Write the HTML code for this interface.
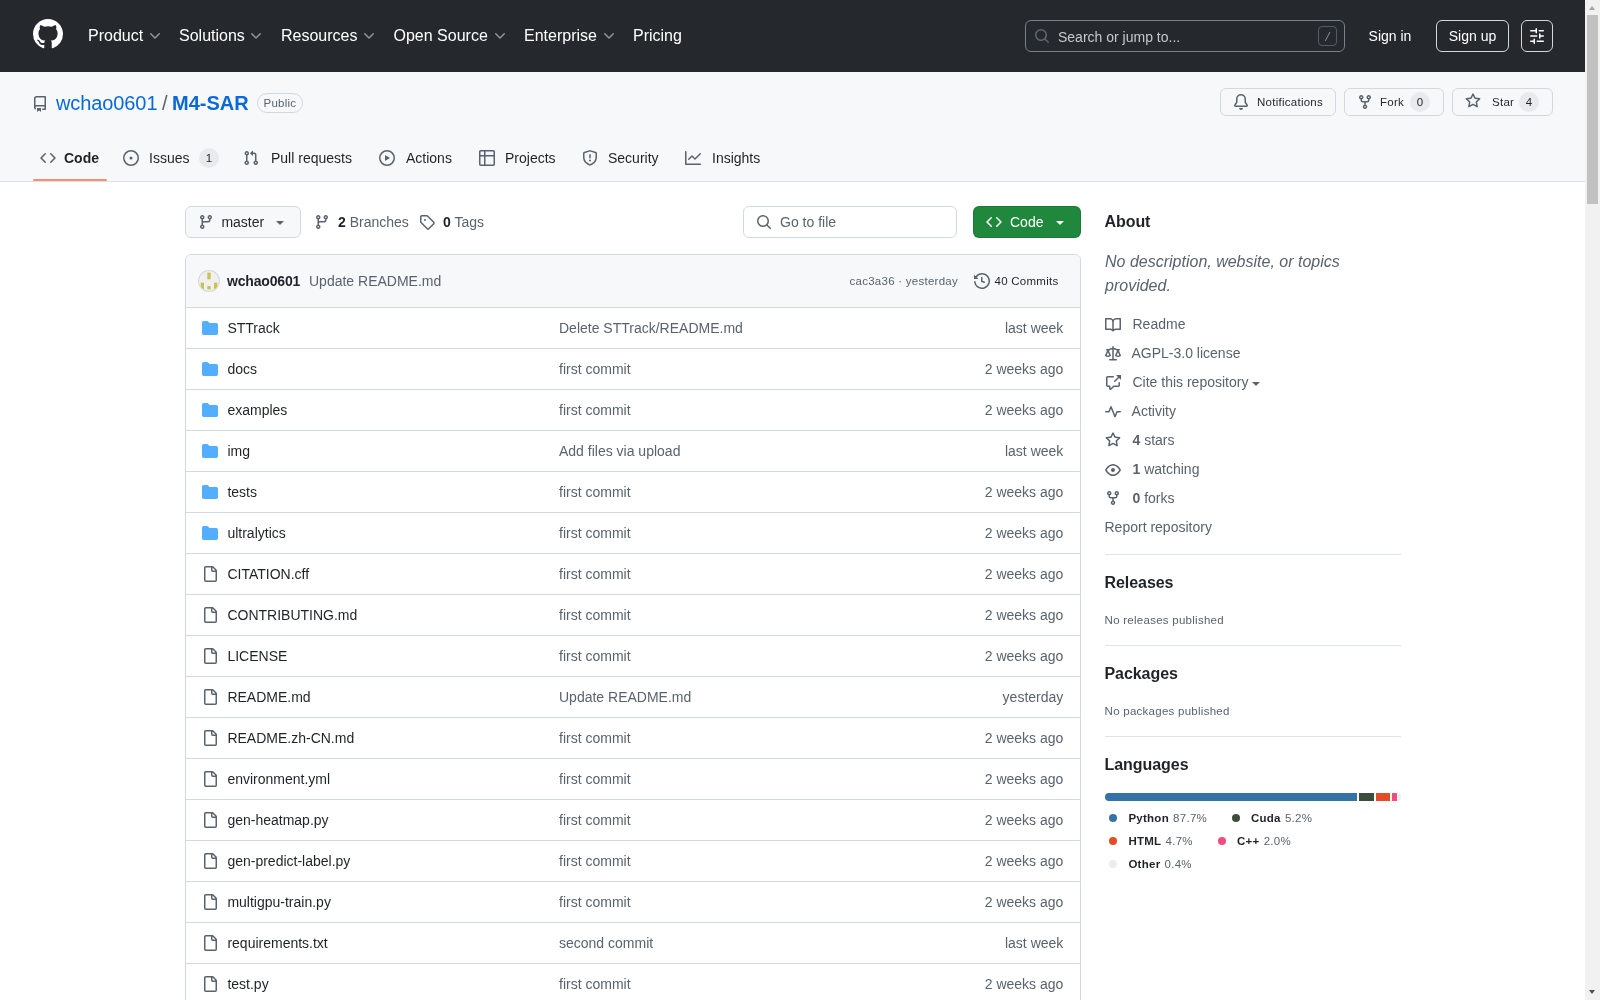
<!DOCTYPE html>
<html lang="en">
<head>
<meta charset="utf-8">
<title>wchao0601/M4-SAR</title>
<style>
*{box-sizing:border-box}
html,body{margin:0;padding:0;overflow:hidden}
body{width:1600px;height:1000px;background:#fff;font-family:"Liberation Sans",Arial,sans-serif;font-size:14px;line-height:1.5;color:#1f2328;position:relative}
a{text-decoration:none;color:inherit}
svg{display:inline-block;vertical-align:text-bottom;fill:currentColor;overflow:visible}
#page{position:absolute;left:0;top:0;width:1585px;height:1000px;overflow:hidden;will-change:transform}
/* scrollbar */
#sb{position:absolute;left:1585px;top:0;width:15px;height:1000px;background:#f1f1f1}
#sb .thumb{position:absolute;left:2px;top:15px;width:11px;height:189px;background:#c1c1c1}
#sb .up{position:absolute;left:4px;top:6px;width:0;height:0;border-left:3.5px solid transparent;border-right:3.5px solid transparent;border-bottom:4px solid #a3a3a3}
#sb .down{position:absolute;left:4px;top:990px;width:0;height:0;border-left:3.5px solid transparent;border-right:3.5px solid transparent;border-top:4px solid #505050}
/* header */
#hdr{position:absolute;left:0;top:0;width:1585px;height:72px;background:#25292e;color:#fff}
#hdr .logo{position:absolute;left:33px;top:19px;width:30px;height:30px}
#hdr .nav{position:absolute;top:0;height:72px;font-size:16px;line-height:24px;color:#fff;white-space:nowrap}
#hdr .nav span{position:absolute;top:24px}
#hdr .nav svg{position:absolute;top:28px;margin-left:-1px;opacity:.5}
#search{position:absolute;left:1025px;top:20px;width:320px;height:32px;border:1px solid #76828f;border-radius:6px;color:#c5c9cd;font-size:14px}
#search .ic{position:absolute;left:8px;top:7px;color:#5d6874}
#search .t{position:absolute;left:32px;top:6px;line-height:21px}
#search .k{position:absolute;left:292px;top:5px;width:19px;height:20px;border:1px solid #555c65;border-radius:4px;color:#858d97;font-family:"Liberation Mono",monospace;font-size:12px;line-height:22px;text-align:center}
.hbtn{position:absolute;top:20px;height:32px;border:1px solid #d1d9e0;border-radius:6px;color:#fff;font-size:14px;line-height:30px;text-align:center}
/* repo head */
#rh{position:absolute;left:0;top:72px;width:1585px;height:110px;background:#f6f8fa;border-bottom:1px solid rgba(209,217,224,.7)}
#title{position:absolute;left:32px;top:16px;height:30px;font-size:20px;line-height:30px;white-space:nowrap}
#title svg{position:absolute;left:0;top:8px;color:#59636e}
#title a{color:#0969da}
.label{position:absolute;border:1px solid #d1d9e0;border-radius:2em;font-size:11.5px;letter-spacing:.26px;line-height:18px;color:#59636e;padding:0 5.5px;font-weight:500}
.abtn{position:absolute;top:16px;height:28px;border:1px solid #d1d9e0;border-radius:6px;background:#f6f8fa;font-size:11.5px;letter-spacing:.26px;line-height:20px;color:#25292e;font-weight:500}
.abtn svg{position:absolute;top:5px;color:#59636e}
.abtn span.t{position:absolute;top:3px}
.cnt{position:absolute;top:3px;height:20px;width:20px;border-radius:2em;background:rgba(129,139,152,.12);font-size:11.5px;letter-spacing:.26px;line-height:20px;font-weight:500;text-align:center;color:#1f2328}
#tabs{position:absolute;left:32px;top:60px;height:48px}
.tab{position:absolute;top:0;height:48px;font-size:14px;line-height:30px;color:#1f2328;white-space:nowrap}
.tab svg{position:absolute;top:18px;color:#59636e}
.tab span.t{position:absolute;top:11px}
.tab.sel span.t{font-weight:600}
.tab.sel::after{content:"";position:absolute;left:0;right:0;bottom:-1px;height:2px;background:#fd8c73;border-radius:6px}
/* main */
#main{position:absolute;left:0;top:182px;width:1585px}
.btn{position:absolute;height:32px;border:1px solid #d1d9e0;border-radius:6px;background:#f6f8fa;font-size:14px;line-height:20px;color:#25292e}
#box{position:absolute;left:185px;top:72px;width:896px;border:1px solid #d1d9e0;border-radius:6px;overflow:hidden}
#ch{height:52px;background:#f6f8fa;position:relative}
.row{position:relative;height:41px;border-top:1px solid #d1d9e0;font-size:14px;line-height:21px;white-space:nowrap}
.row svg{position:absolute;left:16px;top:12px}
.row .dir{color:#54aeff}
.row .fil{color:#59636e}
.row .n{position:absolute;left:41.4px;top:10px;color:#1f2328}
.row .m{position:absolute;left:373px;top:10px;color:#59636e}
.row .d{position:absolute;right:16.7px;top:10px;color:#59636e}
/* sidebar */
#side{position:absolute;left:1105px;top:1px;width:296px}
#side h2{margin:0;font-size:16px;line-height:24px;font-weight:600;position:absolute;left:-.6px;letter-spacing:-.04px}
.si{position:absolute;left:0;font-size:14px;line-height:21px;color:#59636e;white-space:nowrap}
.si svg{position:absolute;left:0;top:3px}
.si span{position:absolute;left:27.5px;top:0}
.si b{color:#59636e;font-weight:600}
.hr{position:absolute;left:0;width:296px;height:1px;background:rgba(209,217,224,.7)}
.sm{position:absolute;left:-.4px;font-size:11.5px;letter-spacing:.26px;line-height:18px;color:#59636e;white-space:nowrap}
.lg{position:absolute;font-size:11.5px;letter-spacing:.26px;line-height:18px;white-space:nowrap;color:#59636e}
.lg i{position:absolute;left:4px;top:5px;width:8px;height:8px;border-radius:50%}
.lg b{color:#1f2328;font-weight:600;margin-left:23.4px;margin-right:4.2px}
</style>
</head>
<body>
<div id="page">
<div id="hdr">
<svg class="logo" viewBox="0 0 16 16"><path d="M8 0c4.42 0 8 3.58 8 8a8.013 8.013 0 0 1-5.45 7.59c-.4.08-.55-.17-.55-.38 0-.27.01-1.13.01-2.2 0-.75-.25-1.23-.54-1.48 1.78-.2 3.65-.88 3.65-3.95 0-.88-.31-1.59-.82-2.15.08-.2.36-1.02-.08-2.12 0 0-.67-.22-2.2.82-.64-.18-1.32-.27-2-.27-.68 0-1.36.09-2 .27-1.53-1.03-2.2-.82-2.2-.82-.44 1.1-.16 1.92-.08 2.12-.51.56-.82 1.28-.82 2.15 0 3.06 1.86 3.75 3.64 3.95-.23.2-.44.55-.51 1.07-.46.21-1.61.55-2.33-.66-.15-.24-.6-.83-1.23-.82-.67.01-.27.38.01.53.34.19.73.9.82 1.13.16.45.68 1.31 2.69.94 0 .67.01 1.3.01 1.49 0 .21-.15.45-.55.38A7.995 7.995 0 0 1 0 8c0-4.42 3.58-8 8-8Z"/></svg>
<div class="nav" style="left:88px"><span>Product</span><svg style="left:60px" width="16" height="16" viewBox="0 0 16 16"><path d="M12.78 5.22a.749.749 0 0 1 0 1.06l-4.25 4.25a.749.749 0 0 1-1.06 0L3.22 6.28a.749.749 0 1 1 1.06-1.06L8 8.939l3.72-3.719a.749.749 0 0 1 1.06 0Z"/></svg></div>
<div class="nav" style="left:179px"><span>Solutions</span><svg style="left:70px" width="16" height="16" viewBox="0 0 16 16"><path d="M12.78 5.22a.749.749 0 0 1 0 1.06l-4.25 4.25a.749.749 0 0 1-1.06 0L3.22 6.28a.749.749 0 1 1 1.06-1.06L8 8.939l3.72-3.719a.749.749 0 0 1 1.06 0Z"/></svg></div>
<div class="nav" style="left:281px"><span>Resources</span><svg style="left:80.75px" width="16" height="16" viewBox="0 0 16 16"><path d="M12.78 5.22a.749.749 0 0 1 0 1.06l-4.25 4.25a.749.749 0 0 1-1.06 0L3.22 6.28a.749.749 0 1 1 1.06-1.06L8 8.939l3.72-3.719a.749.749 0 0 1 1.06 0Z"/></svg></div>
<div class="nav" style="left:393.5px"><span>Open Source</span><svg style="left:99.75px" width="16" height="16" viewBox="0 0 16 16"><path d="M12.78 5.22a.749.749 0 0 1 0 1.06l-4.25 4.25a.749.749 0 0 1-1.06 0L3.22 6.28a.749.749 0 1 1 1.06-1.06L8 8.939l3.72-3.719a.749.749 0 0 1 1.06 0Z"/></svg></div>
<div class="nav" style="left:524px"><span>Enterprise</span><svg style="left:78px" width="16" height="16" viewBox="0 0 16 16"><path d="M12.78 5.22a.749.749 0 0 1 0 1.06l-4.25 4.25a.749.749 0 0 1-1.06 0L3.22 6.28a.749.749 0 1 1 1.06-1.06L8 8.939l3.72-3.719a.749.749 0 0 1 1.06 0Z"/></svg></div>
<div class="nav" style="left:633px"><span>Pricing</span></div>
<div id="search"><svg class="ic" width="16" height="16" viewBox="0 0 16 16"><path d="M10.68 11.74a6 6 0 0 1-7.922-8.982 6 6 0 0 1 8.982 7.922l3.04 3.04a.749.749 0 0 1-.326 1.275.749.749 0 0 1-.734-.215ZM11.5 7a4.499 4.499 0 1 0-8.997 0A4.499 4.499 0 0 0 11.5 7Z"/></svg><span class="t">Search or jump to...</span><span class="k">/</span></div>
<div class="hbtn" style="left:1360px;width:60px;border-color:transparent">Sign in</div>
<div class="hbtn" style="left:1436px;width:73px">Sign up</div>
<div class="hbtn" style="left:1521px;width:32px"><svg style="position:absolute;left:7px;top:7px" width="16" height="16" viewBox="0 0 16 16"><path d="M15 2.75a.75.75 0 0 1-.75.75h-4a.75.75 0 0 1 0-1.5h4a.75.75 0 0 1 .75.75Zm-8.5.75v1.25a.75.75 0 0 0 1.5 0v-4a.75.75 0 0 0-1.5 0V2H1.75a.75.75 0 0 0 0 1.5H6.5Zm1.25 5.25a.75.75 0 0 0 0-1.5h-6a.75.75 0 0 0 0 1.5h6ZM15 8a.75.75 0 0 1-.75.75H11.5V10a.75.75 0 1 1-1.5 0V6a.75.75 0 0 1 1.5 0v1.25h2.75A.75.75 0 0 1 15 8Zm-9 5.25v-2a.75.75 0 0 0-1.5 0v1.25H1.75a.75.75 0 0 0 0 1.5H4.5v1.25a.75.75 0 0 0 1.5 0v-1.25Zm9 0a.75.75 0 0 1-.75.75h-6a.75.75 0 0 1 0-1.5h6a.75.75 0 0 1 .75.75Z"/></svg></div>
</div>

<div id="rh">
<div id="title"><svg width="16" height="16" viewBox="0 0 16 16"><path d="M2 2.5A2.5 2.5 0 0 1 4.5 0h8.75a.75.75 0 0 1 .75.75v12.5a.75.75 0 0 1-.75.75h-2.5a.75.75 0 0 1 0-1.5h1.75v-2h-8a1 1 0 0 0-.714 1.7.75.75 0 1 1-1.072 1.05A2.495 2.495 0 0 1 2 11.5Zm10.500-1h-8a1 1 0 0 0-1 1v6.708A2.486 2.486 0 0 1 4.500 9h8ZM5 12.250a.25.25 0 0 1 .25-.25h3.500a.25.25 0 0 1 .25.25v3.250a.25.25 0 0 1-.4.2l-1.450-1.087a.249.249 0 0 0-.3 0L5.400 15.700a.25.25 0 0 1-.4-.2Z"/></svg>
<a style="position:absolute;left:24px;top:0;letter-spacing:-.1px">wchao0601</a><span style="position:absolute;left:130px;top:0;color:#59636e">/</span><a style="position:absolute;left:140px;top:0;font-weight:700">M4-SAR</a>
<span class="label" style="left:225px;top:5px">Public</span>
</div>
<div class="abtn" style="left:1220px;width:116px"><svg style="left:12px" width="16" height="16" viewBox="0 0 16 16"><path d="M8 16a2 2 0 0 0 1.985-1.75c.017-.137-.097-.25-.235-.25h-3.5c-.138 0-.252.113-.235.25A2 2 0 0 0 8 16ZM3 5a5 5 0 0 1 10 0v2.947c0 .05.015.098.042.139l1.703 2.555A1.519 1.519 0 0 1 13.482 13H2.518a1.516 1.516 0 0 1-1.263-2.36l1.703-2.554A.255.255 0 0 0 3 7.947Zm5-3.5A3.5 3.5 0 0 0 4.5 5v2.947c0 .346-.102.683-.294.97l-1.703 2.556a.017.017 0 0 0-.003.01l.001.006c0 .002.002.004.004.006l.006.004.007.001h10.964l.007-.001.006-.004.004-.006.001-.007a.017.017 0 0 0-.003-.01l-1.703-2.554a1.745 1.745 0 0 1-.294-.97V5A3.5 3.5 0 0 0 8 1.500Z"/></svg><span class="t" style="left:36px">Notifications</span></div>
<div class="abtn" style="left:1344px;width:100px"><svg style="left:12px" width="16" height="16" viewBox="0 0 16 16"><path d="M5 5.372v.878c0 .414.336.75.75.75h4.500a.75.75 0 0 0 .75-.75v-.878a2.250 2.250 0 1 1 1.500 0v.878a2.250 2.250 0 0 1-2.250 2.250h-1.500v2.128a2.251 2.251 0 1 1-1.500 0V8.500h-1.500A2.250 2.250 0 0 1 3.500 6.250v-.878a2.250 2.250 0 1 1 1.500 0ZM5 3.250a.75.75 0 1 0-1.500 0 .75.75 0 0 0 1.500 0Zm6.750.75a.75.75 0 1 0 0-1.500.75.75 0 0 0 0 1.500Zm-3 8.750a.75.75 0 1 0-1.500 0 .75.75 0 0 0 1.500 0Z"/></svg><span class="t" style="left:35px">Fork</span><span class="cnt" style="left:65px">0</span></div>
<div class="abtn" style="left:1452px;width:101px"><svg style="left:12px;top:4px" width="16" height="16" viewBox="0 0 16 16"><path d="M8 .25a.75.75 0 0 1 .673.418l1.882 3.815 4.210.612a.75.75 0 0 1 .416 1.279l-3.046 2.970.719 4.192a.751.751 0 0 1-1.088.791L8 12.347l-3.766 1.980a.75.75 0 0 1-1.088-.79l.72-4.194L.818 6.374a.75.75 0 0 1 .416-1.280l4.210-.611L7.327.668A.75.75 0 0 1 8 .25Zm0 2.445L6.615 5.500a.75.75 0 0 1-.564.41l-3.097.45 2.240 2.184a.75.75 0 0 1 .216.664l-.528 3.084 2.769-1.456a.75.75 0 0 1 .698 0l2.770 1.456-.53-3.084a.75.75 0 0 1 .216-.664l2.240-2.183-3.096-.45a.75.75 0 0 1-.564-.41L8 2.694Z"/></svg><span class="t" style="left:39px">Star</span><span class="cnt" style="left:66px">4</span></div>
<div id="tabs">
<div class="tab sel" style="left:1px;width:74px"><svg style="left:7px" width="16" height="16" viewBox="0 0 16 16"><path d="m11.280 3.220 4.250 4.250a.75.75 0 0 1 0 1.060l-4.250 4.250a.749.749 0 0 1-1.275-.326.749.749 0 0 1 .215-.734L13.940 8l-3.720-3.720a.749.749 0 0 1 .326-1.275.749.749 0 0 1 .734.215Zm-6.560 0a.751.751 0 0 1 1.042.018.751.751 0 0 1 .018 1.042L2.060 8l3.720 3.720a.749.749 0 0 1-.326 1.275.749.749 0 0 1-.734-.215L.470 8.530a.75.75 0 0 1 0-1.060Z"/></svg><span class="t" style="left:31px">Code</span></div>
<div class="tab" style="left:83px"><svg style="left:8px" width="16" height="16" viewBox="0 0 16 16"><path d="M8 9.500a1.500 1.500 0 1 0 0-3 1.500 1.500 0 0 0 0 3Z"/><path d="M8 0a8 8 0 1 1 0 16A8 8 0 0 1 8 0ZM1.500 8a6.500 6.500 0 1 0 13 0 6.500 6.500 0 0 0-13 0Z"/></svg><span class="t" style="left:34px">Issues</span><span class="cnt" style="left:84px;top:16px">1</span></div>
<div class="tab" style="left:203px"><svg style="left:8px" width="16" height="16" viewBox="0 0 16 16"><path d="M1.500 3.250a2.250 2.250 0 1 1 3 2.122v5.256a2.251 2.251 0 1 1-1.500 0V5.372A2.250 2.250 0 0 1 1.500 3.250Zm5.677-.177L9.573.677A.25.25 0 0 1 10 .854V2.500h1A2.500 2.500 0 0 1 13.500 5v5.628a2.251 2.251 0 1 1-1.500 0V5a1 1 0 0 0-1-1h-1v1.646a.25.25 0 0 1-.427.177L7.177 3.427a.25.25 0 0 1 0-.354ZM3.750 2.500a.75.75 0 1 0 0 1.500.75.75 0 0 0 0-1.500Zm0 9.500a.75.75 0 1 0 0 1.500.75.75 0 0 0 0-1.500Zm8.250.75a.75.75 0 1 0 1.500 0 .75.75 0 0 0-1.500 0Z"/></svg><span class="t" style="left:36px">Pull requests</span></div>
<div class="tab" style="left:339px"><svg style="left:8px" width="16" height="16" viewBox="0 0 16 16"><path d="M8 0a8 8 0 1 1 0 16A8 8 0 0 1 8 0ZM1.500 8a6.500 6.500 0 1 0 13 0 6.500 6.500 0 0 0-13 0Zm4.879-2.773 4.264 2.559a.25.25 0 0 1 0 .428l-4.264 2.559A.25.25 0 0 1 6 10.559V5.442a.25.25 0 0 1 .379-.215Z"/></svg><span class="t" style="left:35px">Actions</span></div>
<div class="tab" style="left:439px"><svg style="left:8px" width="16" height="16" viewBox="0 0 16 16"><path d="M0 1.750C0 .784.784 0 1.750 0h12.500C15.216 0 16 .784 16 1.750v12.500A1.750 1.750 0 0 1 14.250 16H1.750A1.750 1.750 0 0 1 0 14.250ZM6.500 6.500v8h7.750a.25.25 0 0 0 .25-.25V6.500Zm8-1.500V1.750a.25.25 0 0 0-.25-.25H6.500V5Zm-13 1.500v7.750c0 .138.112.25.25.25H5v-8ZM5 5V1.500H1.750a.25.25 0 0 0-.25.25V5Z"/></svg><span class="t" style="left:34px">Projects</span></div>
<div class="tab" style="left:542px"><svg style="left:8px" width="16" height="16" viewBox="0 0 16 16"><path d="M7.467.133a1.748 1.748 0 0 1 1.066 0l5.250 1.680A1.750 1.750 0 0 1 15 3.480V7c0 1.566-.32 3.182-1.303 4.682-.983 1.498-2.585 2.813-5.032 3.855a1.697 1.697 0 0 1-1.330 0c-2.447-1.042-4.049-2.357-5.032-3.855C1.320 10.182 1 8.566 1 7V3.480a1.750 1.750 0 0 1 1.217-1.667Zm.61 1.429a.25.25 0 0 0-.153 0l-5.250 1.680a.25.25 0 0 0-.174.238V7c0 1.358.275 2.666 1.057 3.860.784 1.194 2.121 2.340 4.366 3.297a.196.196 0 0 0 .154 0c2.245-.956 3.582-2.104 4.366-3.298C13.225 9.666 13.500 8.360 13.500 7V3.480a.251.251 0 0 0-.174-.237l-5.250-1.680ZM8.750 4.750v3a.75.75 0 0 1-1.500 0v-3a.75.75 0 0 1 1.500 0ZM9 10.500a1 1 0 1 1-2 0 1 1 0 0 1 2 0Z"/></svg><span class="t" style="left:34px">Security</span></div>
<div class="tab" style="left:645px"><svg style="left:8px" width="16" height="16" viewBox="0 0 16 16"><path d="M1.500 1.750V13.500h13.750a.75.75 0 0 1 0 1.500H.750a.75.75 0 0 1-.75-.75V1.750a.75.75 0 0 1 1.500 0Zm14.280 2.530-5.250 5.250a.75.75 0 0 1-1.060 0L7 7.060 4.280 9.780a.751.751 0 0 1-1.042-.018.751.751 0 0 1-.018-1.042l3.250-3.250a.75.75 0 0 1 1.060 0L10 7.940l4.720-4.720a.751.751 0 0 1 1.042.018.751.751 0 0 1 .018 1.042Z"/></svg><span class="t" style="left:35px">Insights</span></div>
</div>
</div>

<div id="main">
<div class="btn" style="left:185px;top:24px;width:116px"><svg  style="position:absolute;left:12px;top:7px;color:#59636e" width="16" height="16" viewBox="0 0 16 16"><path d="M9.5 3.25a2.25 2.25 0 1 1 3 2.122V6A2.5 2.5 0 0 1 10 8.5H6a1 1 0 0 0-1 1v1.128a2.251 2.251 0 1 1-1.5 0V5.372a2.25 2.25 0 1 1 1.5 0v1.836A2.493 2.493 0 0 1 6 7h4a1 1 0 0 0 1-1v-.628A2.25 2.25 0 0 1 9.5 3.25Zm-6 0a.75.75 0 1 0 1.5 0 .75.75 0 0 0-1.5 0Zm8.25-.75a.75.75 0 1 0 0 1.5.75.75 0 0 0 0-1.5ZM4.25 12a.75.75 0 1 0 0 1.5.75.75 0 0 0 0-1.5Z"/></svg><span style="position:absolute;left:35.4px;top:5px">master</span><svg  style="position:absolute;left:86px;top:7px;color:#59636e" width="16" height="16" viewBox="0 0 16 16"><path d="m4.427 7.427 3.396 3.396a.25.25 0 0 0 .354 0l3.396-3.396A.25.25 0 0 0 11.396 7H4.604a.25.25 0 0 0-.177.427Z"/></svg></div>
<div style="position:absolute;left:314px;top:30px;font-size:14px;line-height:21px;color:#59636e;white-space:nowrap"><svg  style="position:absolute;left:0;top:2px" width="16" height="16" viewBox="0 0 16 16"><path d="M9.5 3.25a2.25 2.25 0 1 1 3 2.122V6A2.5 2.5 0 0 1 10 8.5H6a1 1 0 0 0-1 1v1.128a2.251 2.251 0 1 1-1.5 0V5.372a2.25 2.25 0 1 1 1.5 0v1.836A2.493 2.493 0 0 1 6 7h4a1 1 0 0 0 1-1v-.628A2.25 2.25 0 0 1 9.5 3.25Zm-6 0a.75.75 0 1 0 1.5 0 .75.75 0 0 0-1.5 0Zm8.25-.75a.75.75 0 1 0 0 1.5.75.75 0 0 0 0-1.5ZM4.25 12a.75.75 0 1 0 0 1.5.75.75 0 0 0 0-1.5Z"/></svg><span style="position:absolute;left:24px;top:0"><b style="color:#1f2328;font-weight:600">2</b> Branches</span></div>
<div style="position:absolute;left:419px;top:30px;font-size:14px;line-height:21px;color:#59636e;white-space:nowrap"><svg  style="position:absolute;left:0;top:2px" width="16" height="16" viewBox="0 0 16 16"><path d="M1 7.775V2.75C1 1.784 1.784 1 2.75 1h5.025c.464 0 .91.184 1.238.513l6.25 6.25a1.75 1.75 0 0 1 0 2.474l-5.026 5.026a1.75 1.75 0 0 1-2.474 0l-6.25-6.25A1.752 1.752 0 0 1 1 7.775Zm1.5 0c0 .066.026.13.073.177l6.25 6.25a.25.25 0 0 0 .354 0l5.025-5.025a.25.25 0 0 0 0-.354l-6.25-6.25a.25.25 0 0 0-.177-.073H2.75a.25.25 0 0 0-.25.25ZM6 5a1 1 0 1 1 0 2 1 1 0 0 1 0-2Z"/></svg><span style="position:absolute;left:24px;top:0"><b style="color:#1f2328;font-weight:600">0</b> Tags</span></div>
<div style="position:absolute;left:743px;top:24px;width:214px;height:32px;border:1px solid #d1d9e0;border-radius:6px;background:#fff;color:#59636e"><svg  style="position:absolute;left:12px;top:7px" width="16" height="16" viewBox="0 0 16 16"><path d="M10.68 11.74a6 6 0 0 1-7.922-8.982 6 6 0 0 1 8.982 7.922l3.04 3.04a.749.749 0 0 1-.326 1.275.749.749 0 0 1-.734-.215ZM11.5 7a4.499 4.499 0 1 0-8.997 0A4.499 4.499 0 0 0 11.5 7Z"/></svg><span style="position:absolute;left:36px;top:5px;line-height:20px;color:#59636e">Go to file</span></div>
<div style="position:absolute;left:973px;top:24px;width:108px;height:32px;border:1px solid rgba(31,35,40,.15);border-radius:6px;background:#1f883d;color:#fff;font-weight:500"><svg  style="position:absolute;left:12px;top:7px" width="16" height="16" viewBox="0 0 16 16"><path d="m11.28 3.22 4.25 4.25a.75.75 0 0 1 0 1.06l-4.25 4.25a.749.749 0 0 1-1.275-.326.749.749 0 0 1 .215-.734L13.94 8l-3.72-3.72a.749.749 0 0 1 .326-1.275.749.749 0 0 1 .734.215Zm-6.56 0a.751.751 0 0 1 1.042.018.751.751 0 0 1 .018 1.042L2.06 8l3.72 3.72a.749.749 0 0 1-.326 1.275.749.749 0 0 1-.734-.215L.47 8.53a.75.75 0 0 1 0-1.06Z"/></svg><span style="position:absolute;left:36px;top:5px;line-height:20px">Code</span><svg  style="position:absolute;left:78px;top:7px" width="16" height="16" viewBox="0 0 16 16"><path d="m4.427 7.427 3.396 3.396a.25.25 0 0 0 .354 0l3.396-3.396A.25.25 0 0 0 11.396 7H4.604a.25.25 0 0 0-.177.427Z"/></svg></div>
<div id="box">
<div id="ch">
<div style="position:absolute;left:13px;top:16px;width:20px;height:20px;border-radius:50%;background:#f0f0f0;box-shadow:0 0 0 1px rgba(31,35,40,.15);overflow:hidden"><svg width="20" height="20" viewBox="0 0 12 12" style="position:absolute;left:0;top:0"><g fill="#cbc150"><rect x="5" y="1" width="2" height="4"/><rect x="1" y="7" width="2" height="4"/><rect x="9" y="7" width="2" height="4"/><rect x="5" y="9" width="2" height="2"/></g></svg></div>
<a style="position:absolute;left:41px;top:16px;line-height:21px;font-weight:600;color:#1f2328;letter-spacing:-.17px">wchao0601</a>
<a style="position:absolute;left:123px;top:16px;line-height:21px;color:#59636e">Update README.md</a>
<span style="position:absolute;right:122px;top:17px;font-size:11.5px;letter-spacing:.26px;line-height:18px;color:#59636e;white-space:nowrap">cac3a36 · yesterday</span>
<div style="position:absolute;left:788px;top:17px;font-size:11.5px;letter-spacing:.26px;line-height:18px;color:#1f2328;font-weight:500;white-space:nowrap"><svg  style="position:absolute;left:0;top:1px;color:#59636e" width="16" height="16" viewBox="0 0 16 16"><path d="m.427 1.927 1.215 1.215a8.002 8.002 0 1 1-1.6 5.685.75.75 0 1 1 1.493-.154 6.5 6.5 0 1 0 1.18-4.458l1.358 1.358A.25.25 0 0 1 3.896 6H.25A.25.25 0 0 1 0 5.75V2.104a.25.25 0 0 1 .427-.177ZM7.75 4a.75.75 0 0 1 .75.75v2.992l2.028.812a.75.75 0 0 1-.557 1.392l-2.5-1A.751.751 0 0 1 7 8.250v-3.5A.75.75 0 0 1 7.75 4Z"/></svg><span style="position:absolute;left:20.5px;top:0">40 Commits</span></div>
</div>
<div class="row"><svg class="dir" width="16" height="16" viewBox="0 0 16 16"><path d="M1.75 1A1.75 1.75 0 0 0 0 2.75v10.5C0 14.216.784 15 1.75 15h12.5A1.75 1.75 0 0 0 16 13.25v-8.5A1.75 1.75 0 0 0 14.25 3H7.5a.25.25 0 0 1-.2-.1l-.9-1.2C6.07 1.26 5.55 1 5 1H1.75Z"/></svg><a class="n">STTrack</a><a class="m">Delete STTrack/README.md</a><span class="d">last week</span></div>
<div class="row"><svg class="dir" width="16" height="16" viewBox="0 0 16 16"><path d="M1.75 1A1.75 1.75 0 0 0 0 2.75v10.5C0 14.216.784 15 1.75 15h12.5A1.75 1.75 0 0 0 16 13.25v-8.5A1.75 1.75 0 0 0 14.25 3H7.5a.25.25 0 0 1-.2-.1l-.9-1.2C6.07 1.26 5.55 1 5 1H1.75Z"/></svg><a class="n">docs</a><a class="m">first commit</a><span class="d">2 weeks ago</span></div>
<div class="row"><svg class="dir" width="16" height="16" viewBox="0 0 16 16"><path d="M1.75 1A1.75 1.75 0 0 0 0 2.75v10.5C0 14.216.784 15 1.75 15h12.5A1.75 1.75 0 0 0 16 13.25v-8.5A1.75 1.75 0 0 0 14.25 3H7.5a.25.25 0 0 1-.2-.1l-.9-1.2C6.07 1.26 5.55 1 5 1H1.75Z"/></svg><a class="n">examples</a><a class="m">first commit</a><span class="d">2 weeks ago</span></div>
<div class="row"><svg class="dir" width="16" height="16" viewBox="0 0 16 16"><path d="M1.75 1A1.75 1.75 0 0 0 0 2.75v10.5C0 14.216.784 15 1.75 15h12.5A1.75 1.75 0 0 0 16 13.25v-8.5A1.75 1.75 0 0 0 14.25 3H7.5a.25.25 0 0 1-.2-.1l-.9-1.2C6.07 1.26 5.55 1 5 1H1.75Z"/></svg><a class="n">img</a><a class="m">Add files via upload</a><span class="d">last week</span></div>
<div class="row"><svg class="dir" width="16" height="16" viewBox="0 0 16 16"><path d="M1.75 1A1.75 1.75 0 0 0 0 2.75v10.5C0 14.216.784 15 1.75 15h12.5A1.75 1.75 0 0 0 16 13.25v-8.5A1.75 1.75 0 0 0 14.25 3H7.5a.25.25 0 0 1-.2-.1l-.9-1.2C6.07 1.26 5.55 1 5 1H1.75Z"/></svg><a class="n">tests</a><a class="m">first commit</a><span class="d">2 weeks ago</span></div>
<div class="row"><svg class="dir" width="16" height="16" viewBox="0 0 16 16"><path d="M1.75 1A1.75 1.75 0 0 0 0 2.75v10.5C0 14.216.784 15 1.75 15h12.5A1.75 1.75 0 0 0 16 13.25v-8.5A1.75 1.75 0 0 0 14.25 3H7.5a.25.25 0 0 1-.2-.1l-.9-1.2C6.07 1.26 5.55 1 5 1H1.75Z"/></svg><a class="n">ultralytics</a><a class="m">first commit</a><span class="d">2 weeks ago</span></div>
<div class="row"><svg class="fil" width="16" height="16" viewBox="0 0 16 16"><path d="M2 1.75C2 .784 2.784 0 3.75 0h6.586c.464 0 .909.184 1.237.513l2.914 2.914c.329.328.513.773.513 1.237v9.586A1.75 1.75 0 0 1 13.25 16h-9.5A1.75 1.75 0 0 1 2 14.25Zm1.75-.25a.25.25 0 0 0-.25.25v12.5c0 .138.112.25.25.25h9.5a.25.25 0 0 0 .25-.25V6h-2.750A1.75 1.75 0 0 1 9 4.25V1.5Zm6.750.062V4.25c0 .138.112.25.25.25h2.688l-.011-.013-2.914-2.914-.013-.011Z"/></svg><a class="n">CITATION.cff</a><a class="m">first commit</a><span class="d">2 weeks ago</span></div>
<div class="row"><svg class="fil" width="16" height="16" viewBox="0 0 16 16"><path d="M2 1.75C2 .784 2.784 0 3.75 0h6.586c.464 0 .909.184 1.237.513l2.914 2.914c.329.328.513.773.513 1.237v9.586A1.75 1.75 0 0 1 13.25 16h-9.5A1.75 1.75 0 0 1 2 14.25Zm1.75-.25a.25.25 0 0 0-.25.25v12.5c0 .138.112.25.25.25h9.5a.25.25 0 0 0 .25-.25V6h-2.750A1.75 1.75 0 0 1 9 4.25V1.5Zm6.750.062V4.25c0 .138.112.25.25.25h2.688l-.011-.013-2.914-2.914-.013-.011Z"/></svg><a class="n">CONTRIBUTING.md</a><a class="m">first commit</a><span class="d">2 weeks ago</span></div>
<div class="row"><svg class="fil" width="16" height="16" viewBox="0 0 16 16"><path d="M2 1.75C2 .784 2.784 0 3.75 0h6.586c.464 0 .909.184 1.237.513l2.914 2.914c.329.328.513.773.513 1.237v9.586A1.75 1.75 0 0 1 13.25 16h-9.5A1.75 1.75 0 0 1 2 14.25Zm1.75-.25a.25.25 0 0 0-.25.25v12.5c0 .138.112.25.25.25h9.5a.25.25 0 0 0 .25-.25V6h-2.750A1.75 1.75 0 0 1 9 4.25V1.5Zm6.750.062V4.25c0 .138.112.25.25.25h2.688l-.011-.013-2.914-2.914-.013-.011Z"/></svg><a class="n">LICENSE</a><a class="m">first commit</a><span class="d">2 weeks ago</span></div>
<div class="row"><svg class="fil" width="16" height="16" viewBox="0 0 16 16"><path d="M2 1.75C2 .784 2.784 0 3.75 0h6.586c.464 0 .909.184 1.237.513l2.914 2.914c.329.328.513.773.513 1.237v9.586A1.75 1.75 0 0 1 13.25 16h-9.5A1.75 1.75 0 0 1 2 14.25Zm1.75-.25a.25.25 0 0 0-.25.25v12.5c0 .138.112.25.25.25h9.5a.25.25 0 0 0 .25-.25V6h-2.750A1.75 1.75 0 0 1 9 4.25V1.5Zm6.750.062V4.25c0 .138.112.25.25.25h2.688l-.011-.013-2.914-2.914-.013-.011Z"/></svg><a class="n">README.md</a><a class="m">Update README.md</a><span class="d">yesterday</span></div>
<div class="row"><svg class="fil" width="16" height="16" viewBox="0 0 16 16"><path d="M2 1.75C2 .784 2.784 0 3.75 0h6.586c.464 0 .909.184 1.237.513l2.914 2.914c.329.328.513.773.513 1.237v9.586A1.75 1.75 0 0 1 13.25 16h-9.5A1.75 1.75 0 0 1 2 14.25Zm1.75-.25a.25.25 0 0 0-.25.25v12.5c0 .138.112.25.25.25h9.5a.25.25 0 0 0 .25-.25V6h-2.750A1.75 1.75 0 0 1 9 4.25V1.5Zm6.750.062V4.25c0 .138.112.25.25.25h2.688l-.011-.013-2.914-2.914-.013-.011Z"/></svg><a class="n">README.zh-CN.md</a><a class="m">first commit</a><span class="d">2 weeks ago</span></div>
<div class="row"><svg class="fil" width="16" height="16" viewBox="0 0 16 16"><path d="M2 1.75C2 .784 2.784 0 3.75 0h6.586c.464 0 .909.184 1.237.513l2.914 2.914c.329.328.513.773.513 1.237v9.586A1.75 1.75 0 0 1 13.25 16h-9.5A1.75 1.75 0 0 1 2 14.25Zm1.75-.25a.25.25 0 0 0-.25.25v12.5c0 .138.112.25.25.25h9.5a.25.25 0 0 0 .25-.25V6h-2.750A1.75 1.75 0 0 1 9 4.25V1.5Zm6.750.062V4.25c0 .138.112.25.25.25h2.688l-.011-.013-2.914-2.914-.013-.011Z"/></svg><a class="n">environment.yml</a><a class="m">first commit</a><span class="d">2 weeks ago</span></div>
<div class="row"><svg class="fil" width="16" height="16" viewBox="0 0 16 16"><path d="M2 1.75C2 .784 2.784 0 3.75 0h6.586c.464 0 .909.184 1.237.513l2.914 2.914c.329.328.513.773.513 1.237v9.586A1.75 1.75 0 0 1 13.25 16h-9.5A1.75 1.75 0 0 1 2 14.25Zm1.75-.25a.25.25 0 0 0-.25.25v12.5c0 .138.112.25.25.25h9.5a.25.25 0 0 0 .25-.25V6h-2.750A1.75 1.75 0 0 1 9 4.25V1.5Zm6.750.062V4.25c0 .138.112.25.25.25h2.688l-.011-.013-2.914-2.914-.013-.011Z"/></svg><a class="n">gen-heatmap.py</a><a class="m">first commit</a><span class="d">2 weeks ago</span></div>
<div class="row"><svg class="fil" width="16" height="16" viewBox="0 0 16 16"><path d="M2 1.75C2 .784 2.784 0 3.75 0h6.586c.464 0 .909.184 1.237.513l2.914 2.914c.329.328.513.773.513 1.237v9.586A1.75 1.75 0 0 1 13.25 16h-9.5A1.75 1.75 0 0 1 2 14.25Zm1.75-.25a.25.25 0 0 0-.25.25v12.5c0 .138.112.25.25.25h9.5a.25.25 0 0 0 .25-.25V6h-2.750A1.75 1.75 0 0 1 9 4.25V1.5Zm6.750.062V4.25c0 .138.112.25.25.25h2.688l-.011-.013-2.914-2.914-.013-.011Z"/></svg><a class="n">gen-predict-label.py</a><a class="m">first commit</a><span class="d">2 weeks ago</span></div>
<div class="row"><svg class="fil" width="16" height="16" viewBox="0 0 16 16"><path d="M2 1.75C2 .784 2.784 0 3.75 0h6.586c.464 0 .909.184 1.237.513l2.914 2.914c.329.328.513.773.513 1.237v9.586A1.75 1.75 0 0 1 13.25 16h-9.5A1.75 1.75 0 0 1 2 14.25Zm1.75-.25a.25.25 0 0 0-.25.25v12.5c0 .138.112.25.25.25h9.5a.25.25 0 0 0 .25-.25V6h-2.750A1.75 1.75 0 0 1 9 4.25V1.5Zm6.750.062V4.25c0 .138.112.25.25.25h2.688l-.011-.013-2.914-2.914-.013-.011Z"/></svg><a class="n">multigpu-train.py</a><a class="m">first commit</a><span class="d">2 weeks ago</span></div>
<div class="row"><svg class="fil" width="16" height="16" viewBox="0 0 16 16"><path d="M2 1.75C2 .784 2.784 0 3.75 0h6.586c.464 0 .909.184 1.237.513l2.914 2.914c.329.328.513.773.513 1.237v9.586A1.75 1.75 0 0 1 13.25 16h-9.5A1.75 1.75 0 0 1 2 14.25Zm1.75-.25a.25.25 0 0 0-.25.25v12.5c0 .138.112.25.25.25h9.5a.25.25 0 0 0 .25-.25V6h-2.750A1.75 1.75 0 0 1 9 4.25V1.5Zm6.750.062V4.25c0 .138.112.25.25.25h2.688l-.011-.013-2.914-2.914-.013-.011Z"/></svg><a class="n">requirements.txt</a><a class="m">second commit</a><span class="d">last week</span></div>
<div class="row"><svg class="fil" width="16" height="16" viewBox="0 0 16 16"><path d="M2 1.75C2 .784 2.784 0 3.75 0h6.586c.464 0 .909.184 1.237.513l2.914 2.914c.329.328.513.773.513 1.237v9.586A1.75 1.75 0 0 1 13.25 16h-9.5A1.75 1.75 0 0 1 2 14.25Zm1.75-.25a.25.25 0 0 0-.25.25v12.5c0 .138.112.25.25.25h9.5a.25.25 0 0 0 .25-.25V6h-2.750A1.75 1.75 0 0 1 9 4.25V1.5Zm6.750.062V4.25c0 .138.112.25.25.25h2.688l-.011-.013-2.914-2.914-.013-.011Z"/></svg><a class="n">test.py</a><a class="m">first commit</a><span class="d">2 weeks ago</span></div>
<div class="row"><svg class="fil" width="16" height="16" viewBox="0 0 16 16"><path d="M2 1.75C2 .784 2.784 0 3.75 0h6.586c.464 0 .909.184 1.237.513l2.914 2.914c.329.328.513.773.513 1.237v9.586A1.75 1.75 0 0 1 13.25 16h-9.5A1.75 1.75 0 0 1 2 14.25Zm1.75-.25a.25.25 0 0 0-.25.25v12.5c0 .138.112.25.25.25h9.5a.25.25 0 0 0 .25-.25V6h-2.750A1.75 1.75 0 0 1 9 4.25V1.5Zm6.750.062V4.25c0 .138.112.25.25.25h2.688l-.011-.013-2.914-2.914-.013-.011Z"/></svg><a class="n">train.py</a><a class="m">first commit</a><span class="d">2 weeks ago</span></div>
</div>
<div id="side">
<h2 style="top:27px">About</h2>
<div style="position:absolute;left:0;top:67px;width:296px;font-size:16px;line-height:24px;font-style:italic;color:#59636e">No description, website, or topics provided.</div>
<div class="si" style="top:131px"><svg  style="" width="16" height="16" viewBox="0 0 16 16"><path d="M0 1.75A.75.75 0 0 1 .75 1h4.253c1.227 0 2.317.59 3 1.501A3.743 3.743 0 0 1 11.006 1h4.245a.75.75 0 0 1 .75.75v10.5a.75.75 0 0 1-.75.75h-4.507a2.25 2.25 0 0 0-1.591.659l-.622.621a.75.75 0 0 1-1.06 0l-.622-.621A2.25 2.25 0 0 0 5.258 13H.75a.75.75 0 0 1-.75-.75Zm7.251 10.324.004-5.073-.002-2.253A2.25 2.25 0 0 0 5.003 2.5H1.5v9h3.757a3.75 3.75 0 0 1 1.994.574ZM8.755 4.75l-.004 7.322a3.752 3.752 0 0 1 1.992-.572H14.5v-9h-3.495a2.25 2.25 0 0 0-2.25 2.25Z"/></svg><span>Readme</span></div>
<div class="si" style="top:160px"><svg  style="" width="16" height="16" viewBox="0 0 16 16"><path d="M8.75.75V2h.985c.304 0 .603.08.867.231l1.29.736c.038.022.08.033.124.033h2.234a.75.75 0 0 1 0 1.5h-.427l2.111 4.692a.75.75 0 0 1-.154.838l-.53-.53.529.531-.001.002-.002.002-.006.006-.006.005-.01.01-.045.04c-.21.176-.441.327-.686.45C14.556 10.78 13.88 11 13 11a4.498 4.498 0 0 1-2.023-.454 3.544 3.544 0 0 1-.686-.45l-.045-.04-.016-.015-.006-.006-.004-.004v-.001a.75.75 0 0 1-.154-.838L12.178 4.5h-.162c-.305 0-.604-.079-.868-.231l-1.29-.736a.245.245 0 0 0-.124-.033H8.75V13h2.5a.75.75 0 0 1 0 1.5h-6.5a.75.75 0 0 1 0-1.5h2.5V3.5h-.984a.245.245 0 0 0-.124.033l-1.289.737c-.265.15-.564.23-.869.23h-.162l2.112 4.692a.75.75 0 0 1-.154.838l-.53-.53.529.531-.001.002-.002.002-.006.006-.016.015-.045.04c-.21.176-.441.327-.686.45C4.556 10.78 3.88 11 3 11a4.498 4.498 0 0 1-2.023-.454 3.544 3.544 0 0 1-.686-.45l-.045-.04-.016-.015-.006-.006-.004-.004v-.001a.75.75 0 0 1-.154-.838L2.178 4.5H1.75a.75.75 0 0 1 0-1.5h2.234a.249.249 0 0 0 .125-.033l1.288-.737c.265-.15.564-.23.869-.23h.984V.75a.75.75 0 0 1 1.5 0Zm2.945 8.477c.285.135.718.273 1.305.273s1.020-.138 1.305-.273L13 6.327Zm-10 0c.285.135.718.273 1.305.273s1.020-.138 1.305-.273L3 6.327Z"/></svg><span style="left:26.5px">AGPL-3.0 license</span></div>
<div class="si" style="top:189px"><svg  style="top:2px" width="16" height="16" viewBox="0 0 16 16"><path d="M2.75 3.5a.25.25 0 0 0-.25.25v7.5c0 .138.112.25.25.25h2a.75.75 0 0 1 .75.75v2.19l2.72-2.72a.749.749 0 0 1 .53-.22h4.5a.25.25 0 0 0 .25-.25v-2.5a.75.75 0 0 1 1.5 0v2.5A1.75 1.75 0 0 1 13.25 13H9.06l-2.573 2.573A1.458 1.458 0 0 1 4 14.543V13H2.75A1.75 1.75 0 0 1 1 11.25v-7.5C1 2.784 1.784 2 2.75 2h5.5a.75.75 0 0 1 0 1.500ZM16 1.25v4.146a.25.25 0 0 1-.427.177L14.03 4.03l-3.75 3.75a.749.749 0 0 1-1.275-.326.749.749 0 0 1 .215-.734l3.75-3.75-1.543-1.543A.25.25 0 0 1 11.604 1h4.146a.25.25 0 0 1 .25.25Z"/></svg><span>Cite this repository</span><svg  style="left:143px;top:3px" width="16" height="16" viewBox="0 0 16 16"><path d="m4.427 7.427 3.396 3.396a.25.25 0 0 0 .354 0l3.396-3.396A.25.25 0 0 0 11.396 7H4.604a.25.25 0 0 0-.177.427Z"/></svg></div>
<div class="si" style="top:218px"><svg  style="" width="16" height="16" viewBox="0 0 16 16"><path d="M6 2c.306 0 .582.187.696.471L10 10.731l1.304-3.26A.751.751 0 0 1 12 7h3.25a.75.75 0 0 1 0 1.5h-2.742l-1.812 4.528a.751.751 0 0 1-1.392 0L6 4.77 4.696 8.03A.75.75 0 0 1 4 8.5H.75a.75.75 0 0 1 0-1.5h2.742l1.812-4.529A.751.751 0 0 1 6 2Z"/></svg><span style="left:26.6px">Activity</span></div>
<div class="si" style="top:247px"><svg  style="top:2px" width="16" height="16" viewBox="0 0 16 16"><path d="M8 .25a.75.75 0 0 1 .673.418l1.882 3.815 4.21.612a.75.75 0 0 1 .416 1.279l-3.046 2.97.719 4.192a.751.751 0 0 1-1.088.791L8 12.347l-3.766 1.98a.75.75 0 0 1-1.088-.79l.72-4.194L.818 6.374a.75.75 0 0 1 .416-1.28l4.21-.611L7.327.668A.75.75 0 0 1 8 .25Zm0 2.445L6.615 5.5a.75.75 0 0 1-.564.41l-3.097.45 2.24 2.184a.75.75 0 0 1 .216.664l-.528 3.084 2.769-1.456a.75.75 0 0 1 .698 0l2.77 1.456-.53-3.084a.75.75 0 0 1 .216-.664l2.24-2.183-3.096-.45a.75.75 0 0 1-.564-.41L8 2.694Z"/></svg><span><b>4</b> stars</span></div>
<div class="si" style="top:276px"><svg  style="" width="16" height="16" viewBox="0 0 16 16"><path d="M8 2c1.981 0 3.671.992 4.933 2.078 1.27 1.091 2.187 2.345 2.637 3.023a1.62 1.62 0 0 1 0 1.798c-.45.678-1.367 1.932-2.637 3.023C11.67 13.008 9.981 14 8 14c-1.981 0-3.671-.992-4.933-2.078C1.797 10.83.88 9.576.43 8.898a1.62 1.62 0 0 1 0-1.798c.45-.677 1.367-1.931 2.637-3.022C4.33 2.992 6.019 2 8 2ZM1.679 7.932a.12.12 0 0 0 0 .136c.411.622 1.241 1.75 2.366 2.717C5.176 11.758 6.527 12.5 8 12.5c1.473 0 2.825-.742 3.955-1.715 1.124-.967 1.954-2.096 2.366-2.717a.12.12 0 0 0 0-.136c-.412-.621-1.242-1.75-2.366-2.717C10.824 4.242 9.473 3.5 8 3.5c-1.473 0-2.825.742-3.955 1.715-1.124.967-1.954 2.096-2.366 2.717ZM8 10a2 2 0 1 1-.001-3.999A2 2 0 0 1 8 10Z"/></svg><span><b>1</b> watching</span></div>
<div class="si" style="top:305px"><svg  style="top:2px" width="16" height="16" viewBox="0 0 16 16"><path d="M5 5.372v.878c0 .414.336.75.75.75h4.5a.75.75 0 0 0 .75-.75v-.878a2.25 2.25 0 1 1 1.5 0v.878a2.25 2.25 0 0 1-2.25 2.25h-1.5v2.128a2.251 2.251 0 1 1-1.5 0V8.5h-1.5A2.25 2.25 0 0 1 3.5 6.25v-.878a2.25 2.25 0 1 1 1.5 0ZM5 3.25a.75.75 0 1 0-1.5 0 .75.75 0 0 0 1.500 0Zm6.75.75a.75.75 0 1 0 0-1.5.75.75 0 0 0 0 1.500Zm-3 8.75a.75.75 0 1 0-1.500 0 .75.75 0 0 0 1.500 0Z"/></svg><span><b>0</b> forks</span></div>
<div class="si" style="top:334px"><span style="left:-.5px">Report repository</span></div>
<div class="hr" style="top:371px"></div>
<h2 style="top:388px">Releases</h2>
<div class="sm" style="top:428px">No releases published</div>
<div class="hr" style="top:462px"></div>
<h2 style="top:479px">Packages</h2>
<div class="sm" style="top:519px">No packages published</div>
<div class="hr" style="top:553px"></div>
<h2 style="top:570px">Languages</h2>
<div style="position:absolute;left:0;top:610px;width:296px;height:8px;border-radius:6px;overflow:hidden;background:#fff;white-space:nowrap;font-size:0">
<span style="position:absolute;left:0;top:0;height:8px;width:252px;background:#3572A5"></span>
<span style="position:absolute;left:254px;top:0;height:8px;width:15px;background:#3A4E3A"></span>
<span style="position:absolute;left:271px;top:0;height:8px;width:14px;background:#e34c26"></span>
<span style="position:absolute;left:287px;top:0;height:8px;width:5px;background:#f34b7d"></span>
<span style="position:absolute;left:293px;top:0;height:8px;width:3px;background:#ededed"></span>
</div>
<div class="lg" style="left:0;top:626px"><i style="background:#3572A5"></i><b>Python</b>87.7%</div>
<div class="lg" style="left:122.6px;top:626px"><i style="background:#3A4E3A"></i><b>Cuda</b>5.2%</div>
<div class="lg" style="left:0;top:649px"><i style="background:#e34c26"></i><b>HTML</b>4.7%</div>
<div class="lg" style="left:108.6px;top:649px"><i style="background:#f34b7d"></i><b>C++</b>2.0%</div>
<div class="lg" style="left:0;top:672px"><i style="background:#ededed"></i><b>Other</b>0.4%</div>
</div>
</div>

</div>
<div id="sb"><div class="up"></div><div class="thumb"></div><div class="down"></div></div>
</body>
</html>
